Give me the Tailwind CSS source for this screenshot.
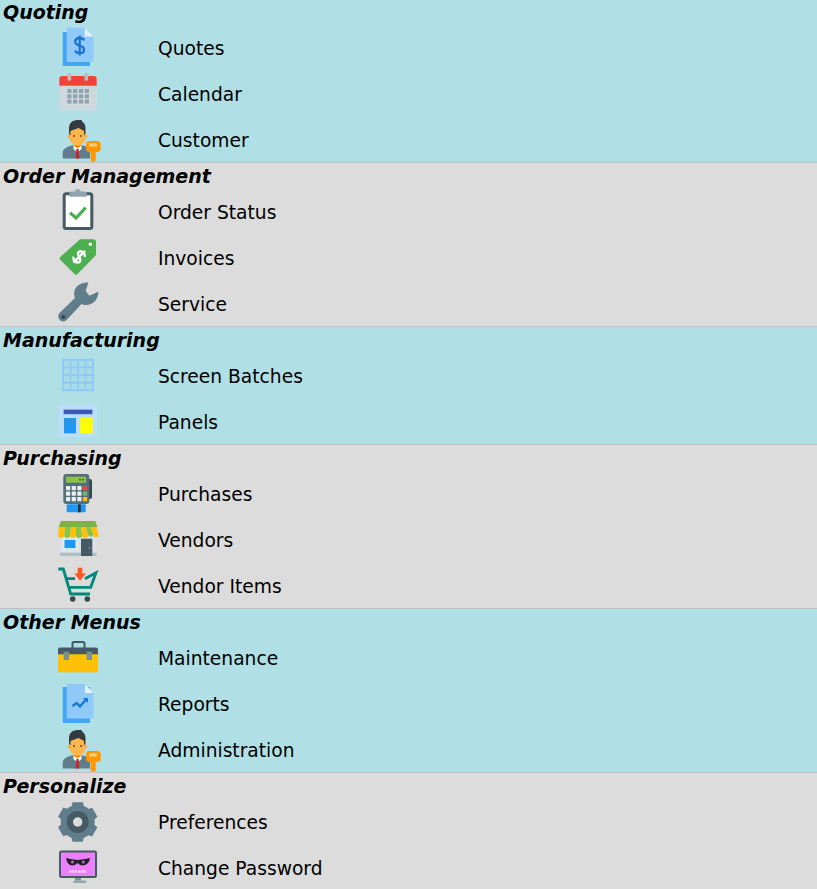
<!DOCTYPE html>
<html><head><meta charset="utf-8"><script src="https://cdn.jsdelivr.net/npm/@tailwindcss/browser@4"></script></head>
<body class="bg-white font-['DejaVu_Sans',sans-serif] text-black text-[18.67px] leading-[24px] overflow-hidden">
<svg width="0" height="0" class="absolute">
<defs>
<g id="person">
<path d="M7.700 41.500V36c0-4 4-6 8-7.200l6.500-1.800 6.500 1.800c4 1.200 6.300 3.200 6.300 7.200v5.500z" fill="#607D8B"/>
<path d="M18.500 28h8v4l-4 3.500-4-3.500z" fill="#FFFFFF"/>
<path d="M21.300 32h2.400l.6 9.500h-3.600z" fill="#C62828"/>
<path d="M19 25h7v4l-3.500 2.500L19 29z" fill="#FB8C00"/>
<circle cx="14.500" cy="19.500" r="1.800" fill="#FFA726"/><circle cx="30.500" cy="19.500" r="1.800" fill="#FFA726"/>
<path d="M14.500 15c0-5 16-5 16 0v6c0 4-4 7.500-8 7.500s-8-3.500-8-7.500z" fill="#FFB74D"/>
<path d="M22.500 3c-5.500 0-8.500 3.500-8.500 8.500v5l1.500 2v-4.500l8-3 5.500 3v4.500l1.500-2v-5c0-3-1-5.500-3-6.500l-1-2z" fill="#333A40"/>
<circle cx="19" cy="19" r=".9" fill="#5D4037"/><circle cx="26" cy="19" r=".9" fill="#5D4037"/>
<rect x="31" y="24" width="14.700" height="11" rx="3.500" fill="#FF9800"/>
<path d="M35.700 34h5v9.500l-2.500 1.500-2.500-1.500z" fill="#FF9800"/>
<rect x="34" y="26.300" width="8" height="3.300" rx="1.500" fill="#FFCC80"/>
</g>
</defs>
</svg>

<section class="bg-[#B0E0E6]">
  <h2 class="h-[25px] pl-[3px] font-bold italic text-[19px] leading-[24px]">Quoting</h2>
  <div class="h-[46px] flex items-center"><svg class="ml-[55px] w-[46px] h-[46px] overflow-visible shrink-0" viewBox="0 0 46 46">
    <rect x="7.700" y="7" width="27.300" height="34" fill="#42A5F5"/>
    <path d="M11.700 2.700H30L38.500 11V37H11.700z" fill="#90CAF9"/><path d="M29.700 2.700l8.800 8.800h-8.800z" fill="#E3F2FD"/>
    <path d="M29 15.500c-.5-1.500-2.200-2.500-4.300-2.500-2.800 0-4.500 1.500-4.500 3.700 0 5 8.900 2.800 8.900 7.800 0 2.200-1.800 3.700-4.400 3.700-2.300 0-4-1-4.600-2.800M24.700 10.500V30.500" fill="none" stroke="#1976D2" stroke-width="2.300"/>
  </svg><span class="ml-[57px] mt-[2px]">Quotes</span></div>
  <div class="h-[46px] flex items-center"><svg class="ml-[55px] w-[46px] h-[46px] overflow-visible shrink-0" viewBox="0 0 46 46">
    <rect x="4.300" y="5" width="37.400" height="34" rx="3" fill="#CFD8DC"/>
    <path d="M4.300 14.700V8a3 3 0 0 1 3-3h31.400a3 3 0 0 1 3 3v6.700z" fill="#F44336"/>
    <rect x="12.500" y="1.700" width="3.600" height="8.300" rx="1.800" fill="#B0BEC5"/><rect x="29.500" y="1.700" width="3.600" height="8.300" rx="1.800" fill="#B0BEC5"/>
    <g fill="#90A4AE"><rect x="12.300" y="18" width="4.200" height="4"/><rect x="18.100" y="18" width="4.200" height="4"/><rect x="23.900" y="18" width="4.200" height="4"/><rect x="29.700" y="18" width="4.200" height="4"/><rect x="12.300" y="23.300" width="4.200" height="4"/><rect x="18.100" y="23.300" width="4.200" height="4"/><rect x="23.900" y="23.300" width="4.200" height="4"/><rect x="29.700" y="23.300" width="4.200" height="4"/><rect x="12.300" y="28.600" width="4.200" height="4"/><rect x="18.100" y="28.600" width="4.200" height="4"/><rect x="23.900" y="28.600" width="4.200" height="4"/><rect x="29.700" y="28.600" width="4.200" height="4"/></g>
  </svg><span class="ml-[57px] mt-[2px]">Calendar</span></div>
  <div class="h-[46px] -mb-px flex items-center"><svg class="ml-[55px] w-[46px] h-[46px] overflow-visible shrink-0" viewBox="0 0 46 46"><use href="#person"/></svg><span class="ml-[57px] mt-[2px]">Customer</span></div>
</section>

<section class="relative bg-[#DCDCDC] border-t border-t-[#C0C0C0]">
  <h2 class="h-[26px] pt-px pl-[3px] font-bold italic text-[19px] leading-[24px]">Order Management</h2>
  <div class="h-[46px] flex items-center"><svg class="ml-[55px] w-[46px] h-[46px] overflow-visible shrink-0" viewBox="0 0 46 46">
    <rect x="9.200" y="4.800" width="27.600" height="34.700" rx="2" fill="#FFFFFF" stroke="#455A64" stroke-width="3"/>
    <path d="M14.300 7.700V4.500a2 2 0 0 1 2-2h3.500c.5-3.500 5.500-3.500 6 0h4a2 2 0 0 1 2 2v3.200z" fill="#90A4AE"/>
    <path d="M15 23.700L21 29L30.700 18.700" fill="none" stroke="#4CAF50" stroke-width="3.200"/>
  </svg><span class="ml-[57px] mt-[2px]">Order Status</span></div>
  <div class="h-[46px] flex items-center"><svg class="ml-[55px] w-[46px] h-[46px] overflow-visible shrink-0" viewBox="0 0 46 46">
    <path d="M5.500 21.800L25 4.300H38.300A2.700 2.700 0 0 1 41 7V20L22.500 39a2 2 0 0 1-3 0L5.500 25a2.200 2.200 0 0 1 0-3.200z" fill="#4CAF50"/>
    <circle cx="35.300" cy="9.300" r="1.700" fill="#FFFFFF"/>
    <g transform="rotate(45 24.300 21.700)"><path d="M28 18c-.5-1.200-2-2-3.700-2-2.400 0-3.800 1.200-3.800 2.900 0 4 7.600 2.200 7.600 6 0 1.800-1.600 3-3.800 3-2 0-3.400-.8-3.900-2.200M24.300 13.500V30" fill="none" stroke="#FFFFFF" stroke-width="2.400"/></g>
  </svg><span class="ml-[57px] mt-[2px]">Invoices</span></div>
  <div class="h-[46px] -mb-px flex items-center"><svg class="ml-[55px] w-[46px] h-[46px] overflow-visible shrink-0" viewBox="0 0 46 46">
    <path d="M33.300 1.700L30.700 10L34.300 14.700L43.300 10.700C43.500 18 38 24 31 24C29 24 27.500 23.500 26.500 23L12 38.500C10 41 6 41 4.500 38.500C2.500 36 3 33.500 5 31.500L20 17C19 15 19 13 19.300 10.700C20 5 27 1 33.300 1.700Z" fill="#607D8B"/>
    <circle cx="8.300" cy="36" r="2" fill="#37474F"/>
  </svg><span class="ml-[57px] mt-[2px]">Service</span></div>
</section>

<section class="relative bg-[#B0E0E6] border-t border-t-[#C0C0C0]">
  <h2 class="h-[26px] pt-px pl-[3px] font-bold italic text-[19px] leading-[24px]">Manufacturing</h2>
  <div class="h-[46px] flex items-center"><svg class="ml-[55px] w-[46px] h-[46px] overflow-visible shrink-0" viewBox="0 0 46 46">
    <rect x="7" y="5.700" width="32" height="32.600" fill="#A9DCE3"/>
    <path d="M8 5.700V38.300M15.500 5.700V38.300M23 5.700V38.300M30.500 5.700V38.300M38 5.700V38.300M7 6.700H39M7 14.300H39M7 22H39M7 29.700H39M7 37.300H39" fill="none" stroke="#90CAF9" stroke-width="2"/>
  </svg><span class="ml-[57px] mt-[2px]">Screen Batches</span></div>
  <div class="h-[46px] -mb-px flex items-center"><svg class="ml-[55px] w-[46px] h-[46px] overflow-visible shrink-0" viewBox="0 0 46 46">
    <rect x="4" y="6" width="38" height="32" fill="#BBDEFB"/>
    <rect x="8.300" y="10.300" width="29.400" height="5" fill="#3F51B5" stroke="#90CAF9" stroke-width=".8"/>
    <rect x="9" y="19" width="12" height="15.300" fill="#2196F3"/><rect x="25" y="19" width="12.700" height="15.300" fill="#FFFF00"/>
  </svg><span class="ml-[57px] mt-[2px]">Panels</span></div>
</section>

<section class="relative bg-[#DCDCDC] border-t border-t-[#C0C0C0]">
  <h2 class="h-[26px] pt-px pl-[3px] font-bold italic text-[19px] leading-[24px]">Purchasing</h2>
  <div class="h-[46px] flex items-center"><svg class="ml-[55px] w-[46px] h-[46px] overflow-visible shrink-0" viewBox="0 0 46 46">
    <rect x="31" y="8" width="6" height="20" rx="2" fill="#37474F"/>
    <rect x="11.700" y="33.300" width="19" height="8" rx="1" fill="#2196F3"/><rect x="23" y="33.300" width="2.700" height="8" fill="#263238"/>
    <rect x="8.300" y="3" width="26" height="30" rx="3" fill="#546E7A"/>
    <rect x="11" y="5.700" width="20" height="6" fill="#8BC34A"/><circle cx="25" cy="8.700" r=".9" fill="#37474F"/><circle cx="28" cy="8.700" r=".9" fill="#37474F"/>
    <g fill="#ECEFF1"><rect x="11" y="15" width="4.200" height="4.200" rx=".6"/><rect x="16.700" y="15" width="4.200" height="4.200" rx=".6"/><rect x="22.300" y="15" width="4.200" height="4.200" rx=".6"/><rect x="11" y="20.500" width="4.200" height="4.200" rx=".6"/><rect x="16.700" y="20.500" width="4.200" height="4.200" rx=".6"/><rect x="22.300" y="20.500" width="4.200" height="4.200" rx=".6"/><rect x="11" y="26" width="4.200" height="4.200" rx=".6"/><rect x="16.700" y="26" width="4.200" height="4.200" rx=".6"/><rect x="22.300" y="26" width="4.200" height="4.200" rx=".6"/></g>
    <rect x="28" y="15" width="4.200" height="4.200" rx=".6" fill="#F44336"/><rect x="28" y="20.500" width="4.200" height="4.200" rx=".6" fill="#66BB6A"/><rect x="28" y="26" width="4.200" height="4.200" rx=".6" fill="#FFC107"/>
  </svg><span class="ml-[57px] mt-[2px]">Purchases</span></div>
  <div class="h-[46px] flex items-center"><svg class="ml-[55px] w-[46px] h-[46px] overflow-visible shrink-0" viewBox="0 0 46 46">
    <rect x="5" y="20" width="36.700" height="19" fill="#DCE3E6"/><rect x="5" y="35.700" width="36.700" height="3.300" fill="#B0BEC5"/>
    <rect x="9" y="22.300" width="12" height="9.400" fill="#2196F3" stroke="#FFFFFF" stroke-width=".8"/>
    <rect x="26" y="21.700" width="11.300" height="17.300" fill="#455A64"/><circle cx="34.500" cy="31" r=".8" fill="#90A4AE"/>
    <path d="M6 4H40.300L42.500 10H3.700z" fill="#7CB342"/>
    <path d="M5 10H10.500L9.200 18a3 3 0 0 1-6 0L3.700 10z" fill="#FFC107"/>
    <path d="M10.500 10H16L15.200 18a3 3 0 0 1-6 0z" fill="#8BC34A"/>
    <path d="M16 10H21L21 18a3 3 0 0 1-6 0z" fill="#FFC107"/>
    <path d="M21 10H26L27 18a3 3 0 0 1-6 0z" fill="#8BC34A"/>
    <path d="M26 10H31L33 18a3 3 0 0 1-6 0z" fill="#FFC107"/>
    <path d="M31 10H36L38.500 18a3 3 0 0 1-5.500 0z" fill="#8BC34A"/>
    <path d="M36 10H41.500L43.500 18a2.500 2.500 0 0 1-5 0z" fill="#FFC107"/>
  </svg><span class="ml-[57px] mt-[2px]">Vendors</span></div>
  <div class="h-[46px] -mb-px flex items-center"><svg class="ml-[55px] w-[46px] h-[46px] overflow-visible shrink-0" viewBox="0 0 46 46">
    <path d="M3.300 6H8.300L15.700 31H35" fill="none" stroke="#00897B" stroke-width="2.800"/>
    <path d="M11 15.700H20M30 15.700L41 9.700L35.700 24.300H14.300" fill="none" stroke="#00897B" stroke-width="2.800"/>
    <circle cx="17.700" cy="36" r="2.800" fill="#37474F"/><circle cx="32.300" cy="36" r="2.800" fill="#37474F"/>
    <path d="M22.700 4.700H27.300V10.500H31L25 17.700L19.300 10.500H22.700z" fill="#FF5722"/>
  </svg><span class="ml-[57px] mt-[2px]">Vendor Items</span></div>
</section>

<section class="relative bg-[#B0E0E6] border-t border-t-[#C0C0C0]">
  <h2 class="h-[26px] pt-px pl-[3px] font-bold italic text-[19px] leading-[24px]">Other Menus</h2>
  <div class="h-[46px] flex items-center"><svg class="ml-[55px] w-[46px] h-[46px] overflow-visible shrink-0" viewBox="0 0 46 46">
    <path d="M17.500 13V8.500a1.500 1.500 0 0 1 1.500-1.500h9a1.500 1.500 0 0 1 1.500 1.500V13" fill="none" stroke="#455A64" stroke-width="2"/>
    <rect x="3" y="19" width="40" height="18.300" fill="#FFC107"/>
    <path d="M3 19.300V14.500a2 2 0 0 1 2-2H41a2 2 0 0 1 2 2v4.800z" fill="#455A64"/>
    <rect x="8.700" y="16.700" width="5.300" height="8.300" fill="#78909C"/><rect x="31.700" y="16.700" width="5.300" height="8.300" fill="#78909C"/>
  </svg><span class="ml-[57px] mt-[2px]">Maintenance</span></div>
  <div class="h-[46px] flex items-center"><svg class="ml-[55px] w-[46px] h-[46px] overflow-visible shrink-0" viewBox="0 0 46 46">
    <rect x="7.700" y="6" width="27.300" height="36" fill="#42A5F5"/>
    <path d="M11.700 3H30L38.500 11.500V37.500H11.700z" fill="#90CAF9"/><path d="M30 3.500l8.500 8.500H30z" fill="#E3F2FD"/>
    <path d="M17.500 25L21.700 22L25 25.500L31 18.500" fill="none" stroke="#1976D2" stroke-width="2.400"/><path d="M28 17H33V22z" fill="#1976D2"/>
  </svg><span class="ml-[57px] mt-[2px]">Reports</span></div>
  <div class="h-[46px] -mb-px flex items-center"><svg class="ml-[55px] w-[46px] h-[46px] overflow-visible shrink-0" viewBox="0 0 46 46"><use href="#person"/></svg><span class="ml-[57px] mt-[2px]">Administration</span></div>
</section>

<section class="relative bg-[#DCDCDC] border-t border-t-[#C0C0C0]">
  <h2 class="h-[26px] pt-px pl-[3px] font-bold italic text-[19px] leading-[24px]">Personalize</h2>
  <div class="h-[46px] flex items-center"><svg class="ml-[55px] w-[46px] h-[46px] overflow-visible shrink-0" viewBox="0 0 46 46">
    <g fill="#607D8B"><circle cx="22.700" cy="23" r="17"/><path d="M17.500 3.300H28L29.500 11H16z"/><path d="M17.500 3.300H28L29.500 11H16z" transform="rotate(60 22.700 23)"/><path d="M17.500 3.300H28L29.500 11H16z" transform="rotate(120 22.700 23)"/><path d="M17.500 3.300H28L29.500 11H16z" transform="rotate(180 22.700 23)"/><path d="M17.500 3.300H28L29.500 11H16z" transform="rotate(240 22.700 23)"/><path d="M17.500 3.300H28L29.500 11H16z" transform="rotate(300 22.700 23)"/></g>
    <circle cx="22.700" cy="23" r="11" fill="#455A64"/><circle cx="22.700" cy="23" r="4.700" fill="#DCDCDC"/>
  </svg><span class="ml-[57px] mt-[2px]">Preferences</span></div>
  <div class="h-[46px] flex items-center"><svg class="ml-[55px] w-[46px] h-[46px] overflow-visible shrink-0" viewBox="0 0 46 46">
    <rect x="20" y="32" width="6" height="3.500" fill="#78909C"/><rect x="18.300" y="35.500" width="13" height="2.500" rx="1" fill="#90A4AE"/>
    <rect x="5" y="6.500" width="36" height="25.500" rx="1.500" fill="#EA80FC" stroke="#455A64" stroke-width="2"/>
    <path d="M11 13Q16.500 14.500 22.500 15Q29 14.500 35 13Q34 20 28 20.500Q25 20.500 22.500 18Q20 20.500 17 20.500Q12 20 11 13z" fill="#212121"/>
    <circle cx="17.500" cy="17" r="1.500" fill="#BA68C8"/><circle cx="28.300" cy="17" r="1.500" fill="#BA68C8"/>
    <path d="M14.500 26.500H31.500" stroke="#F8D7FC" stroke-width="2.600" stroke-dasharray="2 .8"/>
  </svg><span class="ml-[57px] mt-[2px]">Change Password</span></div>
</section>
</body></html>
